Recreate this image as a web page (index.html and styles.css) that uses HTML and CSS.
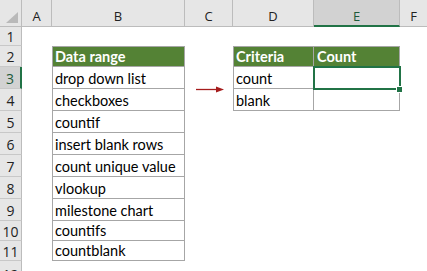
FILE: index.html
```html
<!DOCTYPE html>
<html>
<head>
<meta charset="utf-8">
<link rel="stylesheet" href="styles.css">
</head>
<body>
<div class="sheet">
  <div class="corner"><span class="tri"></span></div>
  <div class="ch">A</div>
  <div class="ch">B</div>
  <div class="ch">C</div>
  <div class="ch">D</div>
  <div class="ch sel">E</div>
  <div class="ch last">F</div>

  <div class="rh">1</div><div class="c"></div><div class="c"></div><div class="c"></div><div class="c"></div><div class="c"></div><div class="c"></div>

  <div class="rh">2</div><div class="c"></div><div class="c t hd first top">Data range</div><div class="c"></div><div class="c t hd first top">Criteria</div><div class="c t hd top">Count</div><div class="c"></div>

  <div class="rh sel">3</div><div class="c"></div><div class="c t first">drop down list</div><div class="c"></div><div class="c t first">count</div><div class="c t"></div><div class="c"></div>

  <div class="rh">4</div><div class="c"></div><div class="c t first">checkboxes</div><div class="c"></div><div class="c t first">blank</div><div class="c t"></div><div class="c"></div>

  <div class="rh">5</div><div class="c"></div><div class="c t first">countif</div><div class="c"></div><div class="c"></div><div class="c"></div><div class="c"></div>

  <div class="rh">6</div><div class="c"></div><div class="c t first">insert blank rows</div><div class="c"></div><div class="c"></div><div class="c"></div><div class="c"></div>

  <div class="rh">7</div><div class="c"></div><div class="c t first">count unique value</div><div class="c"></div><div class="c"></div><div class="c"></div><div class="c"></div>

  <div class="rh">8</div><div class="c"></div><div class="c t first">vlookup</div><div class="c"></div><div class="c"></div><div class="c"></div><div class="c"></div>

  <div class="rh">9</div><div class="c"></div><div class="c t first">milestone chart</div><div class="c"></div><div class="c"></div><div class="c"></div><div class="c"></div>

  <div class="rh">10</div><div class="c"></div><div class="c t first">countifs</div><div class="c"></div><div class="c"></div><div class="c"></div><div class="c"></div>

  <div class="rh">11</div><div class="c"></div><div class="c t first">countblank</div><div class="c"></div><div class="c"></div><div class="c"></div><div class="c"></div>

  <div class="rh r12">12</div><div class="c"></div><div class="c"></div><div class="c"></div><div class="c"></div><div class="c"></div><div class="c"></div>

  <svg class="arrow" width="30" height="9" viewBox="0 0 30 9">
    <line x1="0" y1="4.5" x2="22" y2="4.5" stroke="#a51c1c" stroke-width="1.3"/>
    <polygon points="20,1.5 28,4.5 20,7.5" fill="#a51c1c"/>
  </svg>
  <div class="selbox"></div>
  <div class="handle"></div>
</div>
</body>
</html>
```

FILE: styles.css
```css
html, body {
  margin: 0;
  padding: 0;
  background: #ffffff;
}

.sheet {
  position: relative;
  width: 427px;
  height: 271px;
  overflow: hidden;
  display: grid;
  grid-template-columns: 22px 30px 133px 48px 81px 86px 27px;
  grid-template-rows: 27px 19px 21px repeat(7, 22px) 20px 20px 20px;
  font-family: "Lato", "Liberation Sans", sans-serif;
  font-size: 14.5px;
  color: #000;
}

.corner {
  position: relative;
  background: #e6e6e6;
  border-right: 1px solid #bcbcbc;
  border-bottom: 1px solid #bcbcbc;
  box-sizing: border-box;
}

.tri {
  position: absolute;
  right: 3px;
  bottom: 3px;
  width: 0;
  height: 0;
  border-left: 12px solid transparent;
  border-bottom: 11px solid #b9b9b9;
}

.ch {
  background: #e6e6e6;
  border-right: 1px solid #bcbcbc;
  border-bottom: 1px solid #bcbcbc;
  box-sizing: border-box;
  display: flex;
  align-items: center;
  justify-content: center;
  padding-top: 6px;
  font-family: "Open Sans", "Liberation Sans", sans-serif;
  font-size: 13px;
  color: #222;
}

.ch.last {
  border-right: none;
}

.ch.sel {
  background: #d2d2d2;
  border-bottom: 2px solid #217346;
  color: #1e5a3a;
}

.rh {
  background: #e6e6e6;
  border-right: 1px solid #bcbcbc;
  border-bottom: 1px solid #c8c8c8;
  box-sizing: border-box;
  display: flex;
  align-items: center;
  justify-content: center;
  padding-top: 1px;
  font-family: "Open Sans", "Liberation Sans", sans-serif;
  font-size: 14px;
  color: #222;
}

.rh.r12 {
  align-items: flex-start;
  padding-top: 4px;
}

.rh.sel {
  background: #d2d2d2;
  border-right: 2px solid #217346;
  color: #1e5a3a;
}

.c {
  box-sizing: border-box;
  display: flex;
  align-items: flex-end;
  padding-left: 3px;
  padding-bottom: 1px;
  white-space: nowrap;
  overflow: hidden;
}

.c.t {
  border-right: 1px solid #a6a6a6;
  border-bottom: 1px solid #a6a6a6;
}

.c.first {
  border-left: 1px solid #a6a6a6;
  padding-left: 2px;
}

.c.top {
  border-top: 1px solid #a6a6a6;
}

.c.hd {
  background: #548235;
  color: #ffffff;
  font-weight: bold;
}

.arrow {
  position: absolute;
  left: 196px;
  top: 85px;
}

.selbox {
  position: absolute;
  left: 313px;
  top: 66px;
  width: 88px;
  height: 24px;
  box-sizing: border-box;
  border: 2px solid #217346;
}

.handle {
  position: absolute;
  left: 396px;
  top: 86px;
  width: 5px;
  height: 5px;
  background: #217346;
  border: 1px solid #ffffff;
}
```
